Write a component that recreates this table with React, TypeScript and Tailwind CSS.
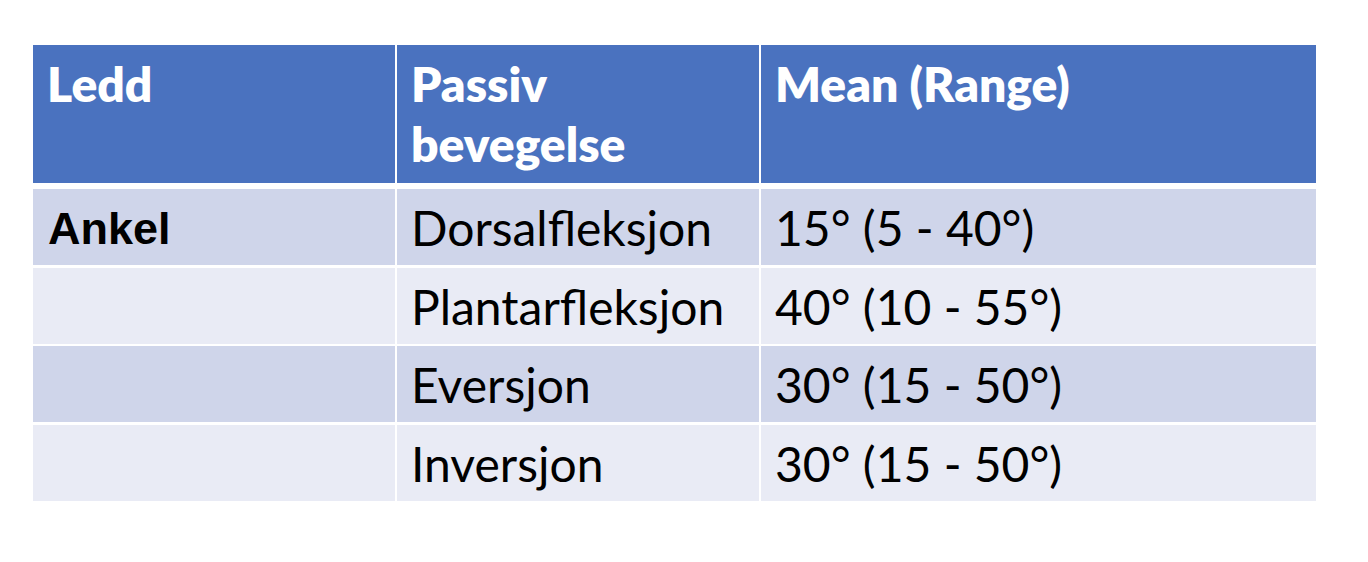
const rows = [
  { ledd: "Ankel", bevegelse: "Dorsalfleksjon", mean: "15° (5 - 40°)" },
  { ledd: "", bevegelse: "Plantarfleksjon", mean: "40° (10 - 55°)" },
  { ledd: "", bevegelse: "Eversjon", mean: "30° (15 - 50°)" },
  { ledd: "", bevegelse: "Inversjon", mean: "30° (15 - 50°)" },
];

const pad = "pl-[14px] pt-[9px] leading-[60px]";

export default function App() {
  return (
    <div className="w-[1368px] h-[562px] bg-white pt-[45px] pl-[33px] font-['Lato',sans-serif]">
      <div className="w-[1283px] flex flex-col">
        <div className="grid grid-cols-[362px_362px_1fr] gap-x-[2px] h-[138px] bg-white text-[48px] text-white font-extrabold">
          <div className={`${pad} bg-[#4a72bf]`}>Ledd</div>
          <div className={`${pad} bg-[#4a72bf]`}>
            Passiv
            <br />
            bevegelse
          </div>
          <div className={`${pad} bg-[#4a72bf]`}>Mean (Range)</div>
        </div>
        <div className="flex flex-col gap-y-[2.5px] mt-[6px]">
          {rows.map((r, i) => {
            const bg = i % 2 === 0 ? "bg-[#cfd5ea]" : "bg-[#e9ebf5]";
            return (
              <div
                key={i}
                className="grid grid-cols-[362px_362px_1fr] gap-x-[2px] h-[76px] text-black"
              >
                <div
                  className={`pl-[15px] pt-[10px] leading-[60px] ${bg} font-bold font-['Liberation_Sans',sans-serif] text-[45px]`}
                >
                  {r.ledd}
                </div>
                <div className={`${pad} ${bg} text-[48px]`}>{r.bevegelse}</div>
                <div className={`${pad} ${bg} text-[48px]`}>{r.mean}</div>
              </div>
            );
          })}
        </div>
      </div>
    </div>
  );
}
